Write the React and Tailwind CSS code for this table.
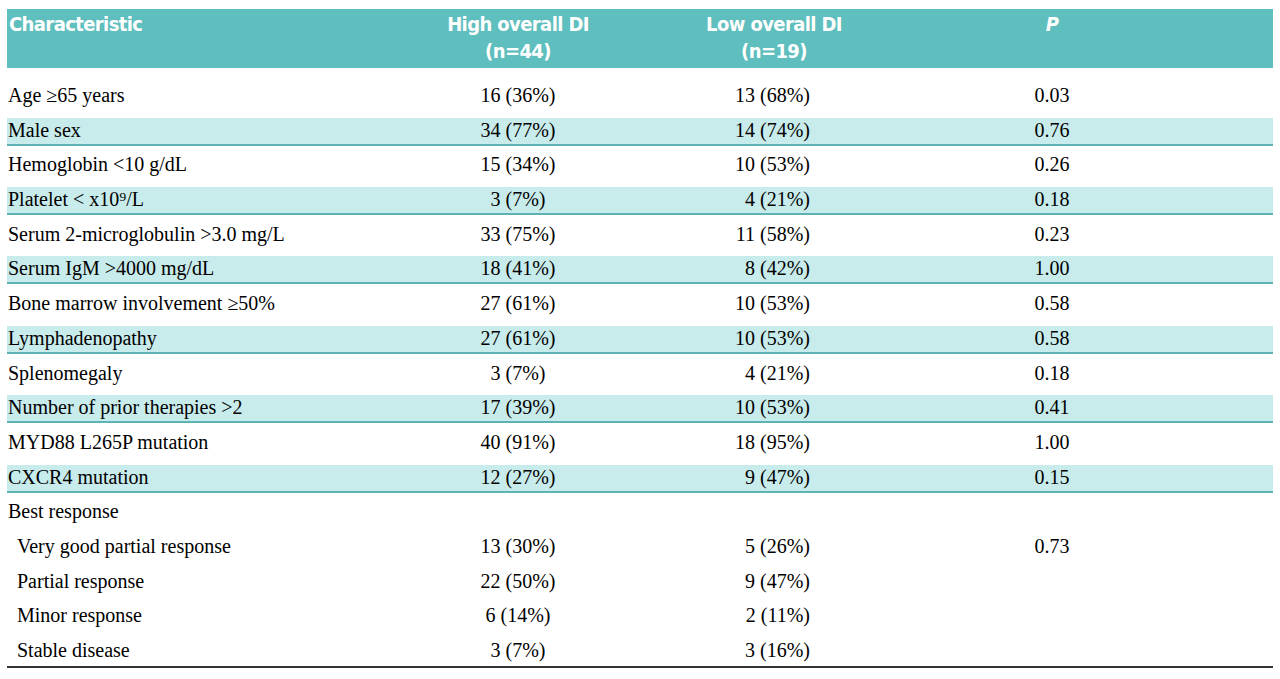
import React from "react";

const rows = [
  { label: "Age ≥65 years", high: "16 (36%)", low: "13 (68%)", p: "0.03" },
  { label: "Male sex", high: "34 (77%)", low: "14 (74%)", p: "0.76", shaded: true },
  { label: "Hemoglobin <10 g/dL", high: "15 (34%)", low: "10 (53%)", p: "0.26" },
  { label: "Platelet < x10⁹/L", high: "3 (7%)", low: "4 (21%)", p: "0.18", shaded: true },
  { label: "Serum  2-microglobulin >3.0 mg/L", high: "33 (75%)", low: "11 (58%)", p: "0.23" },
  { label: "Serum IgM >4000 mg/dL", high: "18 (41%)", low: "8 (42%)", p: "1.00", shaded: true },
  { label: "Bone marrow involvement ≥50%", high: "27 (61%)", low: "10 (53%)", p: "0.58" },
  { label: "Lymphadenopathy", high: "27 (61%)", low: "10 (53%)", p: "0.58", shaded: true },
  { label: "Splenomegaly", high: "3 (7%)", low: "4 (21%)", p: "0.18" },
  { label: "Number of prior therapies >2", high: "17 (39%)", low: "10 (53%)", p: "0.41", shaded: true },
  { label: "MYD88 L265P mutation", high: "40 (91%)", low: "18 (95%)", p: "1.00" },
  { label: "CXCR4 mutation", high: "12 (27%)", low: "9 (47%)", p: "0.15", shaded: true },
  { label: "Best response", high: "", low: "", p: "" },
  { label: "Very good partial response", high: "13 (30%)", low: "5 (26%)", p: "0.73", sub: true },
  { label: "Partial response", high: "22 (50%)", low: "9 (47%)", p: "", sub: true },
  { label: "Minor response", high: "6 (14%)", low: "2 (11%)", p: "", sub: true },
  { label: "Stable disease", high: "3 (7%)", low: "3 (16%)", p: "", sub: true },
];

const grid = "grid grid-cols-[393px_236px_276px_280px_1fr]";

function Row({ row }) {
  return (
    <div
      className={`${grid} h-[28px] leading-[25px] border-b-2 ${
        row.shaded ? "bg-[#c8ebeb] border-[#5eb4b4]" : "border-transparent"
      }`}
    >
      <div className={row.sub ? "pl-[10px]" : "pl-px"}>{row.label}</div>
      <div className="text-center">{row.high}</div>
      <div className="text-right pr-[102px]">{row.low}</div>
      <div className="text-center">{row.p}</div>
      <div />
    </div>
  );
}

export default function App() {
  return (
    <div className="bg-white w-[1280px] h-[679px] overflow-hidden pt-[9px] pl-[7px]">
      <div className="w-[1266px]">
        <div
          className={`${grid} h-[59px] bg-[#5fbebe] text-white font-bold text-[20px] leading-[27px] pt-[2px] tracking-[-0.6px] font-stretch-condensed`}
          style={{ fontFamily: '"Liberation Sans Narrow", "DejaVu Sans Condensed", "Liberation Sans", sans-serif' }}
        >
          <div className="pl-[2px]">Characteristic</div>
          <div className="text-center">
            High overall DI
            <br />
            (n=44)
          </div>
          <div className="text-center">
            Low overall DI
            <br />
            (n=19)
          </div>
          <div className="text-center italic">P</div>
          <div />
        </div>
        <div
          className="mt-[15px] flex flex-col gap-[6.7px] text-[20px] text-black"
          style={{ fontFamily: '"Liberation Serif", serif' }}
        >
          {rows.map((r) => (
            <Row key={r.label} row={r} />
          ))}
        </div>
        <div className="h-[2px] bg-[#333]" />
      </div>
    </div>
  );
}
